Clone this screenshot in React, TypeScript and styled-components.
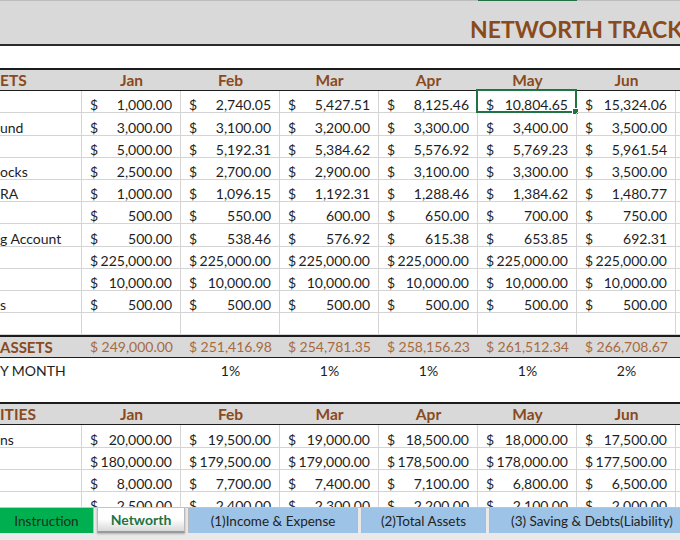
import React from 'react';
import styled, { createGlobalStyle, css } from 'styled-components';

const GlobalStyle = createGlobalStyle`
    html, body {
        margin: 0;
        padding: 0;
        background: #ffffff;
    }
    body {
        font-family: Lato, 'Open Sans', 'Liberation Sans', sans-serif;
    }
`;

const COLS = '82px repeat(6, 99px) 1fr';
const BROWN = '#8a4a1c';
const ROW_H = 22.2;

const Frame = styled.div`
    width: 680px;
    height: 540px;
    overflow: hidden;
    display: flex;
    flex-direction: column;
    background: #fff;
`;

const Sheet = styled.div`
    height: 507px;
    flex-shrink: 0;
    overflow: hidden;
`;

const ColumnEdge = styled.div`
    display: grid;
    grid-template-columns: ${COLS};
    height: 1px;
    background: #bdbdbd;
`;

const EdgeCell = styled.div<{ $active?: boolean }>`
    background: ${({ $active }) => ($active ? '#217346' : 'transparent')};
`;

const TitleBand = styled.div`
    height: 45px;
    box-sizing: border-box;
    background: #d9d9d9;
    border-bottom: 2px solid #2b2b2b;
    display: flex;
    align-items: flex-end;
    padding: 0 0 3px 470px;
    overflow: hidden;
`;

const Title = styled.h1`
    margin: 0;
    font-size: 23px;
    line-height: 23px;
    font-weight: 700;
    color: ${BROWN};
    white-space: nowrap;
`;

const Gap = styled.div`
    height: ${ROW_H}px;
`;

const Row = styled.div`
    display: grid;
    grid-template-columns: ${COLS};
`;

const BandRow = styled(Row)`
    height: 23px;
    box-sizing: border-box;
    background: #d9d9d9;
    border-top: 2px solid #1c1c1c;
    border-bottom: 1px solid #1c1c1c;
`;

const TotalRow = styled(BandRow)`
    height: 22.8px;
`;

const PlainRow = styled(Row)`
    height: ${ROW_H}px;
`;

const cellText = css`
    font-size: 14px;
    line-height: 14px;
    color: #1e1e1e;
    white-space: nowrap;
    overflow: hidden;
`;

const GridCell = styled.div`
    ${cellText};
    position: relative;
    box-sizing: border-box;
    height: ${ROW_H}px;
    border-right: 1px solid #d4d4d4;
    border-bottom: 1px solid #d4d4d4;
    display: flex;
    align-items: flex-end;
    justify-content: space-between;
    padding: 0 8px 0 8px;
    overflow: visible;
`;

const LabelCell = styled(GridCell)`
    padding-left: 0;
    overflow: hidden;
`;

const HeadCell = styled.div<{ $align?: 'left' | 'center' }>`
    font-size: 15.5px;
    font-weight: 700;
    color: ${BROWN};
    display: flex;
    align-items: center;
    justify-content: ${({ $align }) => ($align === 'left' ? 'flex-start' : 'center')};
    white-space: nowrap;
    overflow: hidden;
`;

const TotalCell = styled.div<{ $label?: boolean }>`
    ${cellText};
    line-height: 16px;
    display: flex;
    align-items: center;
    justify-content: space-between;
    padding: ${({ $label }) => ($label ? '0' : '0 8px 0 8px')};
    color: ${({ $label }) => ($label ? BROWN : '#a86a3e')};
    font-weight: ${({ $label }) => ($label ? 700 : 400)};
    font-size: ${({ $label }) => ($label ? '15px' : '14px')};
`;

const PlainCell = styled.div<{ $center?: boolean }>`
    ${cellText};
    display: flex;
    align-items: flex-end;
    justify-content: ${({ $center }) => ($center ? 'center' : 'flex-start')};
    padding-bottom: 2px;
`;

const Selection = styled.div`
    position: absolute;
    top: -2px;
    left: -2px;
    right: -1px;
    bottom: -1px;
    border: 2px solid #217346;
    pointer-events: none;
`;

const Handle = styled.div`
    position: absolute;
    right: -4px;
    bottom: -4px;
    width: 5px;
    height: 5px;
    background: #217346;
    border: 1px solid #fff;
`;

const TabBar = styled.div`
    height: 33px;
    flex-shrink: 0;
    background: #e9e9e9;
    border-top: 1px solid #c4c4c4;
    box-sizing: border-box;
    display: flex;
    align-items: flex-start;
    gap: 3px;
    overflow: hidden;
`;

const Tab = styled.div<{ $width: number; $tone: 'green' | 'active' | 'blue' }>`
    flex-shrink: 0;
    width: ${({ $width }) => $width}px;
    height: 25px;
    box-sizing: border-box;
    display: flex;
    align-items: center;
    justify-content: center;
    font-size: 13.5px;
    white-space: nowrap;
    color: #222;
    border-left: 1px solid #b9b9b9;
    border-right: 1px solid #b9b9b9;
    ${({ $tone }) =>
        $tone === 'green' &&
        css`
            background: #00b050;
            color: #1b2e20;
            border-left: none;
        `}
    ${({ $tone }) =>
        $tone === 'blue' &&
        css`
            background: #9dc3e6;
        `}
    ${({ $tone }) =>
        $tone === 'active' &&
        css`
            background: linear-gradient(#ffffff 50%, #d8d8d8);
            color: #217346;
            font-weight: 700;
            font-size: 14px;
            height: 26px;
            margin-top: -1px;
            border-bottom: 2px solid #9a9a9a;
            box-shadow: 0 1px 2px rgba(0, 0, 0, 0.25);
        `}
`;

const months = ['Jan', 'Feb', 'Mar', 'Apr', 'May', 'Jun'];

type Line = { label: string; values: string[] };

const assets: Line[] = [
    { label: '', values: ['1,000.00', '2,740.05', '5,427.51', '8,125.46', '10,804.65', '15,324.06'] },
    { label: 'und', values: ['3,000.00', '3,100.00', '3,200.00', '3,300.00', '3,400.00', '3,500.00'] },
    { label: '', values: ['5,000.00', '5,192.31', '5,384.62', '5,576.92', '5,769.23', '5,961.54'] },
    { label: 'ocks', values: ['2,500.00', '2,700.00', '2,900.00', '3,100.00', '3,300.00', '3,500.00'] },
    { label: 'RA', values: ['1,000.00', '1,096.15', '1,192.31', '1,288.46', '1,384.62', '1,480.77'] },
    { label: '', values: ['500.00', '550.00', '600.00', '650.00', '700.00', '750.00'] },
    { label: 'g Account', values: ['500.00', '538.46', '576.92', '615.38', '653.85', '692.31'] },
    { label: '', values: Array(6).fill('225,000.00') },
    { label: '', values: Array(6).fill('10,000.00') },
    { label: 's', values: Array(6).fill('500.00') },
    { label: '', values: Array(6).fill('') },
];

const totals = ['249,000.00', '251,416.98', '254,781.35', '258,156.23', '261,512.34', '266,708.67'];
const growth = ['', '1%', '1%', '1%', '1%', '2%'];

const liabilities: Line[] = [
    { label: 'ns', values: ['20,000.00', '19,500.00', '19,000.00', '18,500.00', '18,000.00', '17,500.00'] },
    { label: '', values: ['180,000.00', '179,500.00', '179,000.00', '178,500.00', '178,000.00', '177,500.00'] },
    { label: '', values: ['8,000.00', '7,700.00', '7,400.00', '7,100.00', '6,800.00', '6,500.00'] },
    { label: '', values: ['2,500.00', '2,400.00', '2,300.00', '2,200.00', '2,100.00', '2,000.00'] },
];

const tabs: { name: string; width: number; tone: 'green' | 'active' | 'blue' }[] = [
    { name: 'Instruction', width: 94, tone: 'green' },
    { name: 'Networth', width: 88, tone: 'active' },
    { name: '(1)Income & Expense', width: 170, tone: 'blue' },
    { name: '(2)Total Assets', width: 125, tone: 'blue' },
    { name: '(3) Saving & Debts(Liability)', width: 206, tone: 'blue' },
];

function HeaderRow({ label }: { label: string }) {
    return (
        <BandRow>
            <HeadCell $align="left">{label}</HeadCell>
            {months.map((m) => (
                <HeadCell key={m}>{m}</HeadCell>
            ))}
            <HeadCell />
        </BandRow>
    );
}

function MoneyRow({ line, selected }: { line: Line; selected?: number }) {
    return (
        <PlainRow>
            <LabelCell>{line.label}</LabelCell>
            {line.values.map((v, i) => (
                <GridCell key={i}>
                    {v && <span>$</span>}
                    {v && <span>{v}</span>}
                    {selected === i && (
                        <Selection>
                            <Handle />
                        </Selection>
                    )}
                </GridCell>
            ))}
            <GridCell />
        </PlainRow>
    );
}

export default function App() {
    return (
        <>
            <GlobalStyle />
            <Frame>
                <Sheet>
                    <ColumnEdge>
                        <EdgeCell />
                        {months.map((m) => (
                            <EdgeCell key={m} $active={m === 'May'} />
                        ))}
                        <EdgeCell />
                    </ColumnEdge>
                    <TitleBand>
                        <Title>NETWORTH TRACKER</Title>
                    </TitleBand>
                    <Gap />

                    <HeaderRow label="ETS" />
                    {assets.map((line, i) => (
                        <MoneyRow key={i} line={line} selected={i === 0 ? 4 : undefined} />
                    ))}

                    <TotalRow>
                        <TotalCell $label>ASSETS</TotalCell>
                        {totals.map((t) => (
                            <TotalCell key={t}>
                                <span>$</span>
                                <span>{t}</span>
                            </TotalCell>
                        ))}
                        <TotalCell />
                    </TotalRow>

                    <PlainRow>
                        <PlainCell>Y MONTH</PlainCell>
                        {growth.map((g, i) => (
                            <PlainCell key={i} $center>
                                {g}
                            </PlainCell>
                        ))}
                        <PlainCell />
                    </PlainRow>
                    <Gap />

                    <HeaderRow label="ITIES" />
                    {liabilities.map((line, i) => (
                        <MoneyRow key={i} line={line} />
                    ))}
                </Sheet>

                <TabBar>
                    {tabs.map((t) => (
                        <Tab key={t.name} $width={t.width} $tone={t.tone}>
                            {t.name}
                        </Tab>
                    ))}
                </TabBar>
            </Frame>
        </>
    );
}
